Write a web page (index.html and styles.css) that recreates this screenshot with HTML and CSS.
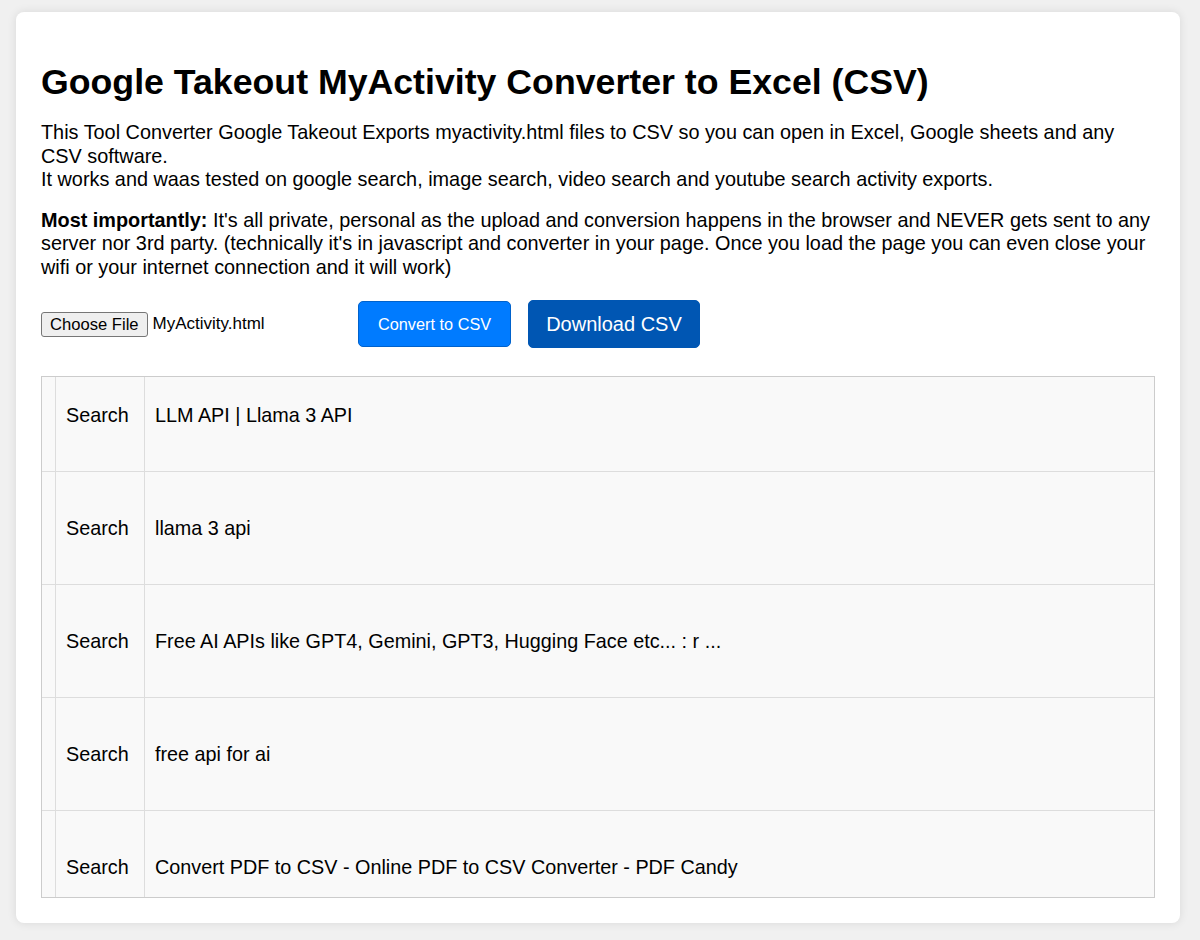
FILE: index.html
```html
<!DOCTYPE html>
<html lang="en">
<head>
<meta charset="utf-8">
<title>Google Takeout MyActivity Converter to Excel (CSV)</title>
<link rel="stylesheet" href="styles.css">
</head>
<body>
<div class="card">
  <h1 class="title">Google Takeout MyActivity Converter to Excel (CSV)</h1>
  <p class="intro">This Tool Converter Google Takeout Exports myactivity.html files to CSV so you can open in Excel, Google sheets and any CSV software.<br>It works and waas tested on google search, image search, video search and youtube search activity exports.</p>
  <p class="intro"><strong>Most importantly:</strong> It's all private, personal as the upload and conversion happens in the browser and NEVER gets sent to any server nor 3rd party. (technically it's in javascript and converter in your page. Once you load the page you can even close your wifi or your internet connection and it will work)</p>
  <div class="controls">
    <div class="file-input">
      <span class="file-btn">Choose File</span>
      <span class="file-name">MyActivity.html</span>
    </div>
    <button class="btn btn-convert" type="button">Convert to CSV</button>
    <button class="btn btn-download" type="button">Download CSV</button>
  </div>
  <div class="table-wrap" id="tableWrap">
    <table class="results">
      <tbody>
        <tr><td class="c-idx"></td><td class="c-type">Search</td><td class="c-title">LLM API | Llama 3 API</td></tr>
        <tr><td class="c-idx"></td><td class="c-type">Search</td><td class="c-title">llama 3 api</td></tr>
        <tr><td class="c-idx"></td><td class="c-type">Search</td><td class="c-title">Free AI APIs like GPT4, Gemini, GPT3, Hugging Face etc... : r ...</td></tr>
        <tr><td class="c-idx"></td><td class="c-type">Search</td><td class="c-title">free api for ai</td></tr>
        <tr><td class="c-idx"></td><td class="c-type">Search</td><td class="c-title">Convert PDF to CSV - Online PDF to CSV Converter - PDF Candy</td></tr>
      </tbody>
    </table>
  </div>
</div>
<script src="script.js"></script>
</body>
</html>
```

FILE: styles.css
```css
html, body {
  margin: 0;
}
body {
  background: #f0f0f0;
  padding: 12px 20px 18px 16px;
  font-family: "Liberation Sans", Arial, Helvetica, sans-serif;
  color: #000;
}
.card {
  background: #fff;
  border-radius: 8px;
  box-shadow: 0 0 10px rgba(0, 0, 0, 0.1);
  padding: 25px;
}
.title {
  font-size: 35.7px;
  font-weight: bold;
  margin: 25px 0 18px;
  line-height: 1.15;
}
.intro {
  font-size: 19.85px;
  line-height: 23.5px;
  margin: 0 0 17px;
}
.controls {
  display: flex;
  align-items: center;
  gap: 17px;
  margin-top: 21px;
}
.file-input {
  width: 300px;
  display: flex;
  align-items: center;
  gap: 5px;
  font-size: 17px;
}
.file-btn {
  display: inline-block;
  background: #efefef;
  border: 1px solid #767676;
  border-radius: 3px;
  padding: 2px 8px;
  font-size: 16.6px;
  line-height: 19px;
  color: #000;
}
.file-name {
  color: #000;
}
.btn {
  font-family: "Liberation Sans", Arial, Helvetica, sans-serif;
  color: #fff;
  border-radius: 5px;
  cursor: pointer;
}
.btn-convert {
  background: #007bff;
  border: 1px solid #0062cc;
  font-size: 16.3px;
  line-height: 20px;
  padding: 12px 19px;
}
.btn-download {
  background: #0056b3;
  border: 1px solid #0056b3;
  font-size: 20px;
  line-height: 24px;
  padding: 11px 17px;
}
.table-wrap {
  margin-top: 28px;
  border: 1px solid #ccc;
  height: 520px;
  overflow-y: auto;
  scrollbar-width: none;
}
.table-wrap::-webkit-scrollbar {
  display: none;
}
.results {
  width: 100%;
  border-collapse: collapse;
  border-style: hidden;
  background: #f9f9f9;
  font-size: 19.8px;
}
.results td {
  border: 1px solid #ddd;
  height: 112px;
  padding: 0 10px;
  vertical-align: middle;
  white-space: nowrap;
}
.results td.c-idx {
  width: 13px;
  padding: 0;
}
.results td.c-type {
  width: 68px;
}
```

FILE: script.js
```js
document.getElementById('tableWrap').scrollTop = 18;
```
